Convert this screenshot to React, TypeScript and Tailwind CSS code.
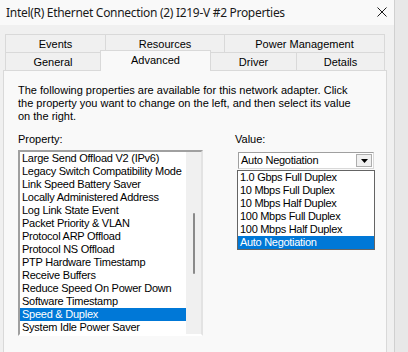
import React from "react";

const props = [
  "Large Send Offload V2 (IPv6)",
  "Legacy Switch Compatibility Mode",
  "Link Speed Battery Saver",
  "Locally Administered Address",
  "Log Link State Event",
  "Packet Priority & VLAN",
  "Protocol ARP Offload",
  "Protocol NS Offload",
  "PTP Hardware Timestamp",
  "Receive Buffers",
  "Reduce Speed On Power Down",
  "Software Timestamp",
  "Speed & Duplex",
  "System Idle Power Saver",
];

const values = [
  "1.0 Gbps Full Duplex",
  "10 Mbps Full Duplex",
  "10 Mbps Half Duplex",
  "100 Mbps Full Duplex",
  "100 Mbps Half Duplex",
  "Auto Negotiation",
];

export default function App() {
  return (
    <div
      className="w-[408px] h-[352px] overflow-hidden flex bg-[#e8e8e8] text-black"
      style={{ fontFamily: '"Liberation Sans", Arial, sans-serif' }}
    >
      <div className="w-[395px] h-full flex flex-col bg-[#f0f0f0] border-r border-[#d0d0d0]">
        {/* Title bar */}
        <div className="h-[25px] shrink-0 bg-[#f9f9f9] flex items-center justify-between pl-[6px] pr-[7px]">
          <span
            className="text-[12px] leading-[16px] whitespace-nowrap text-[#1a1a1a] tracking-[-0.3px]"
            style={{ fontFamily: '"Noto Sans", "Open Sans", sans-serif' }}
          >
            Intel(R) Ethernet Connection (2) I219-V #2 Properties
          </span>
          <svg width="10" height="10" viewBox="0 0 10 10" className="mb-[1px]">
            <path d="M0.5 0.5 L9.5 9.5 M9.5 0.5 L0.5 9.5" stroke="#1a1a1a" strokeWidth="1" fill="none" />
          </svg>
        </div>

        {/* Body */}
        <div className="flex-1 pl-[3px] pt-[9px] text-[11px] leading-[13px]">
          {/* Tabs row 1 */}
          <div className="flex ml-[2px] h-[18px]">
            <div className="w-[101px] border border-b-0 border-[#d9d9d9] bg-[#f0f0f0] flex items-center justify-center pt-[1px]">Events</div>
            <div className="w-[120px] -ml-px border border-b-0 border-[#d9d9d9] bg-[#f0f0f0] flex items-center justify-center pt-[1px]">Resources</div>
            <div className="w-[161px] -ml-px border border-b-0 border-[#d9d9d9] bg-[#f0f0f0] flex items-center justify-center pt-[1px]">Power Management</div>
          </div>
          {/* Tabs row 2 */}
          <div className="flex ml-[2px] h-[18px] items-start">
            <div className="w-[96px] h-[18px] border border-b-0 border-[#d9d9d9] bg-[#f0f0f0] flex items-center justify-center pt-[1px]">General</div>
            <div className="relative z-10 w-[111px] h-[21px] -mt-[2px] -ml-px border border-b-0 border-[#d9d9d9] bg-[#f9f9f9] flex justify-center pt-[3px]">Advanced</div>
            <div className="w-[87px] h-[18px] -ml-px border border-b-0 border-[#d9d9d9] bg-[#f0f0f0] flex items-center justify-center pt-[1px]">Driver</div>
            <div className="w-[89px] h-[18px] -ml-px border border-b-0 border-[#d9d9d9] bg-[#f0f0f0] flex items-center justify-center pt-[1px]">Details</div>
          </div>

          {/* Panel */}
          <div className="w-[384px] h-[300px] border border-[#d9d9d9] bg-[#f9f9f9] pl-[14px] pt-[13px]">
            <p className="whitespace-nowrap">
              The following properties are available for this network adapter. Click
              <br />
              the property you want to change on the left, and then select its value
              <br />
              on the right.
            </p>

            <div className="flex mt-[10px]">
              {/* Left column */}
              <div className="w-[185px] flex flex-col">
                <div>Property:</div>
                <div className="mt-[4px] h-[186px] flex border-2 border-t-[#a0a0a0] border-l-[#a0a0a0] border-b-[#ffffff] border-r-[#e3e3e3] bg-white">
                  <div className="w-[166px] flex flex-col overflow-hidden">
                    {props.map((p) => (
                      <div
                        key={p}
                        className={
                          "h-[13px] leading-[13px] pl-[2px] whitespace-nowrap tracking-[-0.25px] " +
                          (p === "Speed & Duplex" ? "bg-[#0078d7] text-white" : "")
                        }
                      >
                        {p}
                      </div>
                    ))}
                  </div>
                  <div className="flex-1 bg-[#f0f0f0] flex justify-center pt-[61px]">
                    <div className="w-[2px] h-[61px] bg-[#8a8a8a] rounded-[1px]" />
                  </div>
                </div>
              </div>

              {/* Right column */}
              <div className="ml-[32px] flex flex-col">
                <div>Value:</div>
                <div className="relative mt-[6px] ml-[3px] w-[136px] h-[17px] flex bg-white border border-t-[#a0a0a0] border-l-[#a0a0a0] border-b-[#d9d9d9] border-r-[#d9d9d9]">
                  <div className="flex-1 pl-[2px] leading-[15px] whitespace-nowrap tracking-[-0.25px]">Auto Negotiation</div>
                  <div className="w-[16px] h-[13px] mt-[1px] mr-[1px] border border-[#adadad] bg-[#f0f0f0] flex items-center justify-center">
                    <svg width="7" height="4" viewBox="0 0 7 4">
                      <path d="M0 0 H7 L3.5 4 Z" fill="#000" />
                    </svg>
                  </div>
                  {/* Open dropdown list */}
                  <div className="absolute left-[-2px] top-[17px] w-[138px] h-[80px] border border-[#646464] bg-white flex flex-col">
                    {values.map((v) => (
                      <div
                        key={v}
                        className={
                          "h-[13px] leading-[13px] pl-[2px] whitespace-nowrap tracking-[-0.3px] " +
                          (v === "Auto Negotiation" ? "bg-[#0078d7] text-white" : "")
                        }
                      >
                        {v}
                      </div>
                    ))}
                  </div>
                </div>
              </div>
            </div>
          </div>
        </div>
      </div>
    </div>
  );
}
